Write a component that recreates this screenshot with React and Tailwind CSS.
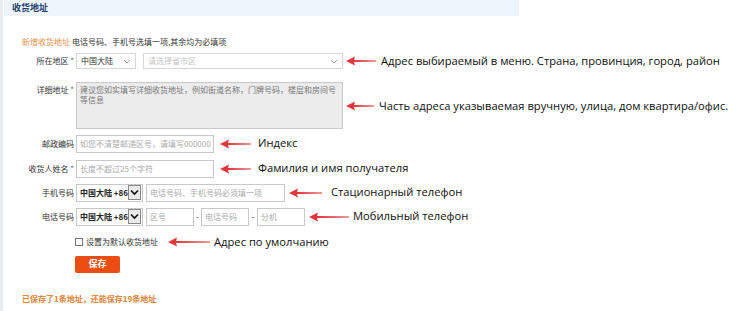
import React from 'react';

const cn = "font-['Noto_Sans_CJK_SC','Noto_Sans',sans-serif]";
const ru = "font-['Open_Sans','Liberation_Sans',sans-serif]";

const Arrow = ({ w = 30 }) => (
  <svg width={w} height="10" viewBox={`0 0 ${w} 10`} className="shrink-0">
    <polygon points={`0,5 9,0.5 8,4 ${w},4.4 ${w},5.6 8,6 9,9.5`} fill="#e2373a" />
  </svg>
);

const Note = ({ arrow = 30, gap = 'ml-[3px]', textGap = 'ml-[6px]', children }) => (
  <div className={`flex items-center ${gap}`}>
    <Arrow w={arrow} />
    <span className={`${ru} ${textGap} text-[11.2px] text-[#111] whitespace-nowrap`}>{children}</span>
  </div>
);

const Label = ({ children, req }) => (
  <div className={`${cn} w-[73px] shrink-0 text-right pr-[2px] text-[8px] text-[#333] whitespace-nowrap`}>
    {children}
    {req && <span className="text-[#666]"> *</span>}
  </div>
);

const Input = ({ w, ph }) => (
  <div
    className={`${cn} ${w} h-[18px] border border-[#c8c8c8] bg-white px-[3px] flex items-center text-[8px] text-[#aaa] whitespace-nowrap overflow-hidden`}
  >
    {ph}
  </div>
);

const PhoneSelect = () => (
  <div className="flex items-center h-[18px] border border-[#c8c8c8] bg-white">
    <span className={`${cn} pl-[3px] pr-[1px] w-[51px] text-[8px] font-semibold text-[#222] whitespace-nowrap`}>中国大陆 +86</span>
    <span className="w-[13px] h-[15px] mr-[1px] border border-[#888] bg-[#eaeaea] flex items-center justify-center">
      <svg width="9" height="7" viewBox="0 0 9 7">
        <path d="M1 1.5 L4.5 5 L8 1.5" stroke="#111" strokeWidth="1.6" fill="none" />
      </svg>
    </span>
  </div>
);

const Chevron = () => (
  <svg width="8" height="5" viewBox="0 0 8 5">
    <path d="M1 1 L4 4 L7 1" stroke="#999" strokeWidth="0.9" fill="none" />
  </svg>
);

export default function App() {
  return (
    <div className="w-[750px] h-[311px] bg-white flex overflow-hidden">
      <div className="w-[3px] bg-[#e8edf2] shrink-0" />
      <div className="flex-1 flex flex-col">
        <div className="w-[515px] h-[16px] ml-[1px] bg-[#eef4fc] flex items-center pl-[8px]">
          <span className={`${cn} text-[9px] font-bold text-[#1f3f70]`}>收货地址</span>
        </div>

        <div className={`${cn} mt-[20px] ml-[19px] text-[8px] whitespace-nowrap`}>
          <span className="text-[#e8914a]">新增收货地址</span>
          <span className="text-[#333] ml-[2px]">电话号码、手机号选填一项,其余均为必填项</span>
        </div>

        <div className="flex items-center mt-[5px]">
          <Label req>所在地区</Label>
          <div className="flex items-center gap-[7px]">
            <div className="w-[60px] h-[16px] border border-[#d6d6d6] flex items-center justify-between px-[4px]">
              <span className={`${cn} text-[8px] text-[#333]`}>中国大陆</span>
              <Chevron />
            </div>
            <div className="w-[200px] h-[16px] border border-[#d6d6d6] flex items-center justify-between px-[4px]">
              <span className={`${cn} text-[8px] text-[#c4c4c4]`}>请选择省市区</span>
              <Chevron />
            </div>
          </div>
          <Note arrow={30} textGap="ml-[5px]">Адрес выбираемый в меню. Страна, провинция, город, район</Note>
        </div>

        <div className="flex mt-[12px]">
          <Label req>
            <span className="inline-block mt-[2px]">详细地址</span>
          </Label>
          <div className={`${cn} w-[267px] h-[47px] border border-[#c8c8c8] bg-[#ececec] px-[3px] pt-[2px] text-[8px] leading-[10px] text-[#777]`}>
            建议您如实填写详细收货地址，例如街道名称，门牌号码，楼层和房间号等信息
          </div>
          <div className="self-center mt-[2px]">
            <Note arrow={28} textGap="ml-[5px]">Часть адреса указываемая вручную, улица, дом квартира/офис.</Note>
          </div>
        </div>

        <div className="flex items-center mt-[6px]">
          <Label>邮政编码</Label>
          <Input w="w-[138px]" ph="如您不清楚邮递区号，请填写000000" />
          <Note arrow={31} gap="ml-[6px]" textGap="ml-[7px]">Индекс</Note>
        </div>

        <div className="flex items-center mt-[7px]">
          <Label req>收货人姓名</Label>
          <Input w="w-[138px]" ph="长度不超过25个字符" />
          <Note arrow={31} gap="ml-[6px]" textGap="ml-[7px]">Фамилия и имя получателя</Note>
        </div>

        <div className="flex items-center mt-[6px]">
          <Label>手机号码</Label>
          <PhoneSelect />
          <div className="ml-[3px]">
            <Input w="w-[139px]" ph="电话号码、手机号码必须填一项" />
          </div>
          <Note arrow={33} gap="ml-[4px]" textGap="ml-[9px]">Стационарный телефон</Note>
        </div>

        <div className="flex items-center mt-[6px]">
          <Label>电话号码</Label>
          <PhoneSelect />
          <div className="ml-[3px] flex items-center">
            <Input w="w-[48px]" ph="区号" />
            <span className="w-[7px] text-center text-[8px] text-[#555]">-</span>
            <Input w="w-[48px]" ph="电话号码" />
            <span className="w-[8px] text-center text-[8px] text-[#555]">-</span>
            <Input w="w-[48px]" ph="分机" />
          </div>
          <Note arrow={40} gap="ml-[4px]" textGap="ml-[4px]">Мобильный телефон</Note>
        </div>

        <div className="flex items-center mt-[8px] ml-[72px]">
          <span className="w-[8px] h-[8px] border border-[#777] bg-white" />
          <span className={`${cn} ml-[3px] text-[8px] text-[#333] whitespace-nowrap`}>设置为默认收货地址</span>
          <Note arrow={42} gap="ml-[10px]" textGap="ml-[4px]">Адрес по умолчанию</Note>
        </div>

        <div className="ml-[72px] mt-[5px]">
          <button className={`${cn} w-[45px] h-[17px] rounded-[2px] bg-[#ec4d12] text-white text-[9px] font-bold flex items-center justify-center`}>
            保存
          </button>
        </div>

        <div className={`${cn} mt-[20px] ml-[19px] text-[8px] font-bold text-[#e0843a] whitespace-nowrap`}>
          已保存了1条地址，还能保存19条地址
        </div>
      </div>
    </div>
  );
}
